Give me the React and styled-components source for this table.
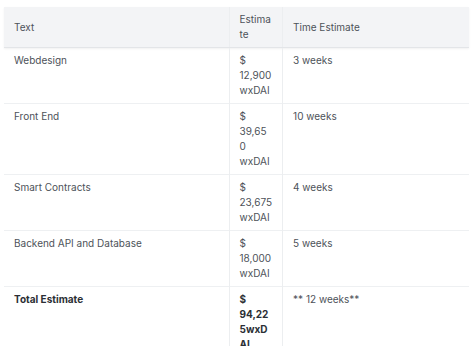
import React from "react";
import styled, { createGlobalStyle } from "styled-components";

const Global = createGlobalStyle`
  html, body { margin: 0; padding: 0; background: #ffffff; }
  body { font-family: Inter, "Liberation Sans", sans-serif; }
`;

const Wrap = styled.div`
  padding: 7px 5px 0 4px;
`;

const Table = styled.table`
  width: 100%;
  border-collapse: collapse;
  table-layout: fixed;
  font-size: 10px;
  line-height: 15px;
  color: #4d5259;
`;

const HeadRow = styled.tr`
  background: #f3f4f6;
  box-shadow: 0 1px 2px rgba(0, 0, 0, 0.06);
`;

const Th = styled.th`
  text-align: left;
  font-weight: 400;
  padding: 5px 10px;
  vertical-align: middle;
  border-bottom: 1px solid #e3e5e8;
  border-left: ${(p) => (p.$first ? "none" : "1px solid #eceef0")};
  overflow-wrap: anywhere;
  width: ${(p) => p.$w || "auto"};
`;

const Tr = styled.tr`
  border-bottom: 1px solid #eef0f2;
`;

const Td = styled.td`
  padding: 5px 10px;
  vertical-align: top;
  border-left: ${(p) => (p.$first ? "none" : "1px solid #eceef0")};
  font-weight: ${(p) => (p.$bold ? 700 : 400)};
  color: ${(p) => (p.$bold ? "#2b2f35" : "inherit")};
  overflow-wrap: anywhere;
`;

const rows = [
  ["Webdesign", "$ 12,900 wxDAI", "3 weeks"],
  ["Front End", "$ 39,650 wxDAI", "10 weeks"],
  ["Smart Contracts", "$ 23,675 wxDAI", "4 weeks"],
  ["Backend API and Database", "$ 18,000 wxDAI", "5 weeks"],
];

export default function App() {
  return (
    <>
      <Global />
      <Wrap>
        <Table>
          <thead>
            <HeadRow>
              <Th $first $w="204.5px">Text</Th>
              <Th $w="32.6px">Estimate</Th>
              <Th>Time Estimate</Th>
            </HeadRow>
          </thead>
          <tbody>
            {rows.map((r) => (
              <Tr key={r[0]}>
                <Td $first>{r[0]}</Td>
                <Td>{r[1]}</Td>
                <Td>{r[2]}</Td>
              </Tr>
            ))}
            <Tr>
              <Td $first $bold>Total Estimate</Td>
              <Td $bold>$ 94,225wxDAI</Td>
              <Td>** 12 weeks**</Td>
            </Tr>
          </tbody>
        </Table>
      </Wrap>
    </>
  );
}
